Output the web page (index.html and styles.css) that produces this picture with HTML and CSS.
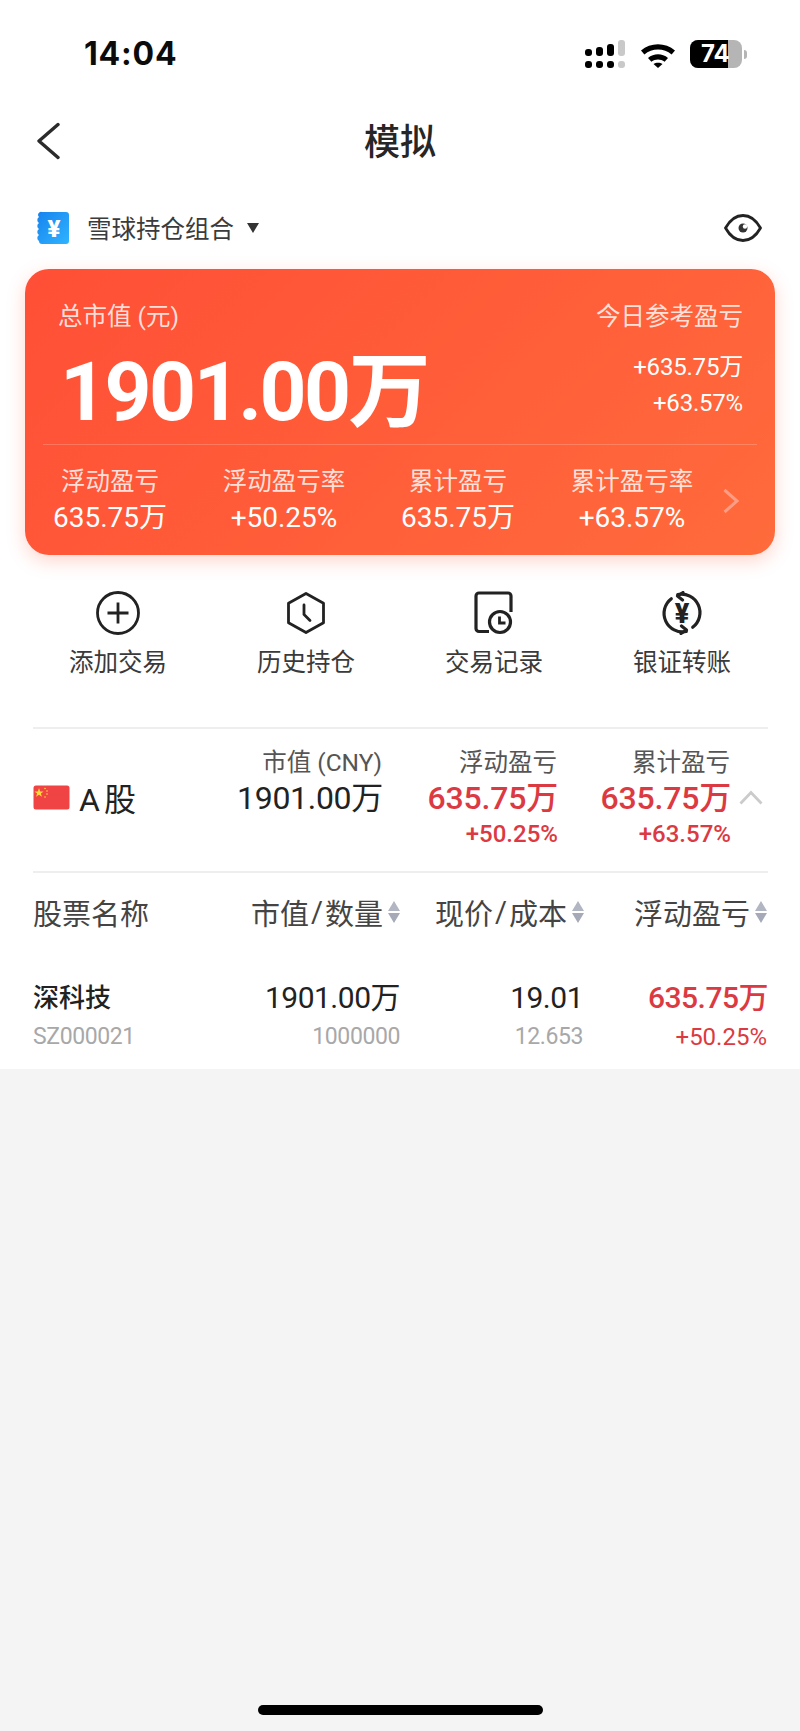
FILE: index.html
```html
<!DOCTYPE html>
<html lang="zh-CN">
<head>
  <meta charset="UTF-8">
  <title>模拟</title>
  <link rel="stylesheet" href="styles.css">
</head>
<body>
  <div class="page">
    <div class="sheet">
      <div class="status-bar">
        <span class="clock">14:04</span>
        <div class="status-icons">
          <svg class="signal" width="41" height="29" viewBox="0 0 41 29">
            <rect x="0" y="9" width="7" height="7" rx="3" fill="#000"/>
            <rect x="11" y="7" width="7" height="9" rx="3" fill="#000"/>
            <rect x="22" y="4" width="7" height="12" rx="3" fill="#000"/>
            <rect x="33" y="0" width="7" height="16" rx="3" fill="#c9c9c9"/>
            <rect x="0" y="21" width="7" height="7" rx="3" fill="#000"/>
            <rect x="11" y="21" width="7" height="7" rx="3" fill="#000"/>
            <rect x="22" y="21" width="7" height="7" rx="3" fill="#000"/>
            <rect x="33" y="21" width="7" height="7" rx="3" fill="#c9c9c9"/>
          </svg>
          <svg class="wifi" width="36" height="27" viewBox="0 0 36 27">
            <path d="M1 9.500C10.500 1 25.500 1 35 9.500l-3.400 3.900C24 6.800 12 6.800 4.400 13.400z" fill="#000"/>
            <path d="M8 17C13.800 12 22.200 12 28 17l-3.400 3.800C20.800 17.700 15.200 17.700 11.400 20.800z" fill="#000"/>
            <path d="M13.500 23C16 21.200 20 21.200 22.500 23L18 27z" fill="#000"/>
          </svg>
          <div class="battery">
            <div class="battery-body">
              <div class="battery-level"></div>
              <span class="battery-text">74</span>
            </div>
            <div class="battery-nub"></div>
          </div>
        </div>
      </div>

      <div class="nav">
        <svg class="nav-back" width="24" height="38" viewBox="0 0 24 38">
          <path d="M22 2.500L3 19l19 16.500" fill="none" stroke="#2b2b2b" stroke-width="3.400" stroke-linecap="round" stroke-linejoin="round"/>
        </svg>
        <h1 class="nav-title">模拟</h1>
      </div>

      <div class="account">
        <svg class="account-logo" width="34" height="34" viewBox="0 0 34 34">
          <defs>
            <linearGradient id="ticketBlue" x1="0" y1="0" x2="1" y2="1">
              <stop offset="0" stop-color="#1783ee"/>
              <stop offset="1" stop-color="#2fb4ff"/>
            </linearGradient>
          </defs>
          <path d="M6 1h24a3 3 0 0 1 3 3v26a3 3 0 0 1-3 3H6a3 3 0 0 1-3-3a3.500 3.500 0 0 1 0-6a3.500 3.500 0 0 1 0-6a3.500 3.500 0 0 1 0-6a3.500 3.500 0 0 1 0-6a3 3 0 0 1 3-5z" fill="url(#ticketBlue)"/>
          <text x="18" y="25.500" class="logo-yen">¥</text>
        </svg>
        <span class="account-name">雪球持仓组合</span>
        <span class="account-caret"></span>
        <svg class="account-eye" width="38" height="28" viewBox="0 0 38 28">
          <path d="M1.500 14C6 6 12 1.500 19 1.500S32 6 36.500 14C32 22 26 26.500 19 26.500S6 22 1.500 14z" fill="none" stroke="#222" stroke-width="2.800" stroke-linejoin="round"/>
          <circle cx="19" cy="14" r="4.500" fill="#333"/>
          <circle cx="21" cy="12.500" r="2.200" fill="#fff"/>
        </svg>
      </div>

      <div class="card">
        <div class="card-top">
          <div>
            <div class="card-label">总市值 (元)</div>
            <div class="card-total">1901.00万</div>
          </div>
          <div class="card-today">
            <div class="card-label">今日参考盈亏</div>
            <div class="today-value">+635.75万</div>
            <div class="today-value">+63.57%</div>
          </div>
        </div>
        <div class="card-stats">
          <div class="stat">
            <div class="stat-label">浮动盈亏</div>
            <div class="stat-value">635.75万</div>
          </div>
          <div class="stat">
            <div class="stat-label">浮动盈亏率</div>
            <div class="stat-value">+50.25%</div>
          </div>
          <div class="stat">
            <div class="stat-label">累计盈亏</div>
            <div class="stat-value">635.75万</div>
          </div>
          <div class="stat">
            <div class="stat-label">累计盈亏率</div>
            <div class="stat-value">+63.57%</div>
          </div>
          <svg class="card-more" width="18" height="26" viewBox="0 0 18 26">
            <path d="M2.500 2L15 13 2.500 24" fill="none" stroke="#ff9d84" stroke-width="3"/>
          </svg>
        </div>
      </div>

      <div class="actions">
        <div class="action">
          <svg width="44" height="44" viewBox="0 0 44 44">
            <circle cx="22" cy="22" r="20.500" fill="none" stroke="#222" stroke-width="2.800"/>
            <path d="M11.500 22h21M22 11.500v21" fill="none" stroke="#222" stroke-width="2.800"/>
          </svg>
          <span>添加交易</span>
        </div>
        <div class="action">
          <svg width="44" height="44" viewBox="0 0 44 44">
            <path d="M22 2.500L39.500 12.200v19.600L22 41.500 4.500 31.800V12.200z" fill="none" stroke="#222" stroke-width="2.800" stroke-linejoin="round"/>
            <path d="M20 14v9.500l6 6" fill="none" stroke="#222" stroke-width="2.800" stroke-linecap="round"/>
          </svg>
          <span>历史持仓</span>
        </div>
        <div class="action">
          <svg width="44" height="44" viewBox="0 0 44 44">
            <path d="M17 40.500H7a3 3 0 0 1-3-3V5a3 3 0 0 1 3-3h29a3 3 0 0 1 3 3v16" fill="none" stroke="#222" stroke-width="3.200"/>
            <circle cx="28" cy="31" r="10.500" fill="none" stroke="#222" stroke-width="3.200"/>
            <path d="M27.500 25.500V32h6" fill="none" stroke="#222" stroke-width="2.800"/>
          </svg>
          <span>交易记录</span>
        </div>
        <div class="action">
          <svg width="44" height="44" viewBox="0 0 44 44">
            <path d="M32.700 36.300A18.500 18.500 0 0 0 17.700 3.500" fill="none" stroke="#222" stroke-width="3.200" stroke-linecap="round"/>
            <path d="M23 1.500L17.500 5l5 4" fill="none" stroke="#222" stroke-width="3.200" stroke-linecap="round" stroke-linejoin="round"/>
            <path d="M11.300 7.700A18.500 18.500 0 0 0 26.300 40.500" fill="none" stroke="#222" stroke-width="3.200" stroke-linecap="round"/>
            <path d="M21 42.500l5.500-3.500-5-4" fill="none" stroke="#222" stroke-width="3.200" stroke-linecap="round" stroke-linejoin="round"/>
            <text x="22" y="31.500" class="transfer-yen">¥</text>
          </svg>
          <span>银证转账</span>
        </div>
      </div>

      <div class="market">
        <div class="market-name">
          <svg width="37" height="25" viewBox="0 0 37 25">
            <rect x="0.500" y="0.500" width="36" height="24" rx="2.500" fill="#f04444"/>
            <polygon points="6,3 7.200,6.400 10.600,6.400 7.900,8.500 8.900,11.800 6,9.800 3.100,11.800 4.100,8.500 1.400,6.400 4.800,6.400" fill="#ffd83a"/>
            <circle cx="12" cy="3.500" r="0.800" fill="#ffd83a"/>
            <circle cx="14" cy="6" r="0.800" fill="#ffd83a"/>
            <circle cx="14" cy="9" r="0.800" fill="#ffd83a"/>
            <circle cx="12" cy="12" r="0.800" fill="#ffd83a"/>
          </svg>
          <span>A股</span>
        </div>
        <div class="market-col">
          <div class="market-label">市值 (CNY)</div>
          <div class="market-value">1901.00万</div>
        </div>
        <div class="market-col">
          <div class="market-label">浮动盈亏</div>
          <div class="market-value up">635.75万</div>
          <div class="market-rate up">+50.25%</div>
        </div>
        <div class="market-col">
          <div class="market-label">累计盈亏</div>
          <div class="market-value up">635.75万</div>
          <div class="market-rate up">+63.57%</div>
        </div>
        <svg class="market-fold" width="24" height="15" viewBox="0 0 24 15">
          <path d="M1.500 13.500L12 2.500l10.500 11" fill="none" stroke="#cbcbcb" stroke-width="2.800"/>
        </svg>
      </div>

      <div class="table-head">
        <div class="head-name">股票名称</div>
        <div class="head-cell">市值<i>/</i>数量<span class="sort"></span></div>
        <div class="head-cell">现价<i>/</i>成本<span class="sort"></span></div>
        <div class="head-cell">浮动盈亏<span class="sort"></span></div>
      </div>

      <div class="table-row">
        <div>
          <div class="stock-name">深科技</div>
          <div class="stock-sub">SZ000021</div>
        </div>
        <div class="cell">
          <div class="cell-main">1901.00万</div>
          <div class="stock-sub">1000000</div>
        </div>
        <div class="cell">
          <div class="cell-main">19.01</div>
          <div class="stock-sub">12.653</div>
        </div>
        <div class="cell">
          <div class="cell-main up">635.75万</div>
          <div class="stock-sub up">+50.25%</div>
        </div>
      </div>
    </div>

    <div class="home-bar"></div>
  </div>
</body>
</html>
```

FILE: styles.css
```css
* {
  margin: 0;
  padding: 0;
  box-sizing: border-box;
}

body {
  font-family: "Roboto", "Noto Sans CJK SC", sans-serif;
  color: #222;
  background: #f4f4f4;
}

.page {
  height: 1731px;
  display: flex;
  flex-direction: column;
}

.sheet {
  height: 1069px;
  background: #fff;
}

/* status bar */
.status-bar {
  height: 90px;
  padding: 16px 53px 0 84px;
  display: flex;
  justify-content: space-between;
  align-items: center;
}

.clock {
  font-family: "Inter", sans-serif;
  font-size: 32px;
  font-weight: 700;
  color: #0b0b0b;
  letter-spacing: 0.8px;
}

.status-icons {
  display: flex;
  align-items: center;
  gap: 14px;
  margin-top: 2px;
}

.battery {
  display: flex;
  align-items: center;
  gap: 2px;
}

.battery-body {
  width: 52px;
  height: 28px;
  border-radius: 8px;
  background: #b5b5b5;
  position: relative;
  overflow: hidden;
}

.battery-level {
  width: 38px;
  height: 100%;
  background: #000;
}

.battery-text {
  position: absolute;
  left: 11px;
  top: 0;
  font-family: "Inter", sans-serif;
  font-size: 24px;
  font-weight: 700;
  line-height: 28px;
  color: #fff;
}

.battery-nub {
  width: 3px;
  height: 9px;
  border-radius: 0 3px 3px 0;
  background: #b5b5b5;
}

/* title bar */
.nav {
  height: 102px;
  padding-bottom: 4px;
  display: flex;
  align-items: center;
  justify-content: center;
  position: relative;
}

.nav-back {
  position: absolute;
  left: 36px;
  top: 32px;
}

.nav-title {
  font-size: 36px;
  font-weight: 500;
  color: #262626;
}

/* account switcher */
.account {
  height: 72px;
  padding: 0 38px 0 36px;
  display: flex;
  align-items: center;
}

.logo-yen {
  font-family: "Roboto", sans-serif;
  font-size: 24px;
  font-weight: 900;
  fill: #fff;
  text-anchor: middle;
}

.account-name {
  margin-left: 17px;
  margin-top: -2px;
  font-size: 24.500px;
  color: #3b3b3b;
}

.account-caret {
  margin-left: 13px;
  border-left: 6.500px solid transparent;
  border-right: 6.500px solid transparent;
  border-top: 10px solid #333;
}

.account-eye {
  margin-left: auto;
}

/* summary card */
.card {
  margin: 5px 25px 0;
  height: 286px;
  border-radius: 24px;
  background: linear-gradient(135deg, #ff4f36, #ff6b3c);
  box-shadow: 0 6px 18px rgba(255, 90, 60, 0.25);
  color: #fff;
  padding: 0 18px;
}

.card-top {
  height: 176px;
  padding: 32px 14px 0 15px;
  display: flex;
  justify-content: space-between;
  border-bottom: 1px solid rgba(255, 255, 255, 0.2);
}

.card-label {
  font-size: 24.500px;
  line-height: 32px;
  color: rgba(255, 255, 255, 0.82);
}

.card-total {
  margin-top: 17px;
  margin-left: 2px;
  font-size: 82px;
  font-weight: 700;
  line-height: 84px;
  letter-spacing: -2.500px;
  white-space: nowrap;
}

.card-today {
  text-align: right;
}

.today-value {
  font-size: 24px;
  line-height: 36px;
  letter-spacing: -0.200px;
}

.card-today .card-label + .today-value {
  margin-top: 16px;
}

.card-stats {
  height: 109px;
  margin-left: -20px;
  padding-top: 19px;
  display: grid;
  grid-template-columns: repeat(4, 174px);
  position: relative;
}

.stat {
  text-align: center;
  white-space: nowrap;
}

.stat-label {
  font-size: 24.500px;
  line-height: 36px;
  color: rgba(255, 255, 255, 0.82);
}

.stat-value {
  font-size: 28px;
  line-height: 36px;
}

.card-more {
  position: absolute;
  right: 17px;
  top: 43px;
}

/* quick actions */
.actions {
  margin: 36px 24px 0;
  display: grid;
  grid-template-columns: repeat(4, 1fr);
}

.action {
  display: flex;
  flex-direction: column;
  align-items: center;
  gap: 11px;
  font-size: 24.500px;
  color: #3a3a3a;
  line-height: 34px;
}

.transfer-yen {
  font-family: "Roboto", sans-serif;
  font-size: 27px;
  font-weight: 900;
  fill: #222;
  text-anchor: middle;
}

/* market group */
.market {
  margin: 47px 32px 0 33px;
  height: 146px;
  border-top: 2px solid #eee;
  border-bottom: 2px solid #eee;
  display: grid;
  grid-template-columns: 112px 238px 175px 173px 37px;
  padding-top: 18px;
}

.market-name {
  height: 40px;
  margin-top: 30px;
  display: flex;
  align-items: center;
  gap: 9px;
  font-size: 32px;
  letter-spacing: 4px;
  white-space: nowrap;
}

.market-col {
  text-align: right;
  white-space: nowrap;
}

.market-label {
  padding-right: 1px;
  font-size: 24.500px;
  line-height: 32px;
  color: #555;
}

.market-value {
  font-size: 32px;
  line-height: 38px;
  letter-spacing: -0.300px;
}

.market-value.up {
  font-weight: 500;
  letter-spacing: -0.200px;
}

.market-rate {
  font-size: 24px;
  font-weight: 500;
  line-height: 34px;
  letter-spacing: 0;
}

.up {
  color: #dc3a42;
}

.market-fold {
  margin: 43px 0 0 8px;
}

/* holdings table */
.table-head {
  height: 78px;
  padding-left: 33px;
  display: grid;
  grid-template-columns: 150px 217px 184px 183px;
  align-items: center;
}

.head-name {
  font-size: 29px;
  color: #444;
}

.head-cell {
  font-size: 29px;
  color: #444;
  display: flex;
  justify-content: flex-end;
  align-items: center;
  white-space: nowrap;
}

.head-cell i {
  font-style: normal;
  padding: 0 2px;
}

.sort {
  margin-left: 5px;
  width: 12px;
  display: flex;
  flex-direction: column;
  gap: 2px;
}

.sort::before,
.sort::after {
  content: "";
  border-left: 6px solid transparent;
  border-right: 6px solid transparent;
}

.sort::before {
  border-bottom: 10px solid #b2b5c2;
}

.sort::after {
  border-top: 10px solid #a6aab8;
}

.table-row {
  padding: 27px 0 0 33px;
  display: grid;
  grid-template-columns: 150px 217px 183px 185px;
}

.stock-name {
  font-size: 26px;
  line-height: 40px;
  font-weight: 500;
}

.stock-sub {
  font-size: 23px;
  line-height: 38px;
  letter-spacing: -0.400px;
  color: #a8a8a8;
}

.cell {
  text-align: right;
  white-space: nowrap;
}

.cell-main {
  font-size: 30px;
  line-height: 40px;
  letter-spacing: -0.500px;
  color: #222;
}

.cell-main.up {
  font-weight: 500;
  color: #dc3a42;
}

.stock-sub.up {
  padding-right: 1px;
  font-size: 24px;
  letter-spacing: 0;
  color: #dc3a42;
}

.home-bar {
  width: 285px;
  height: 10px;
  margin: 636px auto 0;
  border-radius: 5px;
  background: #000;
}
```
